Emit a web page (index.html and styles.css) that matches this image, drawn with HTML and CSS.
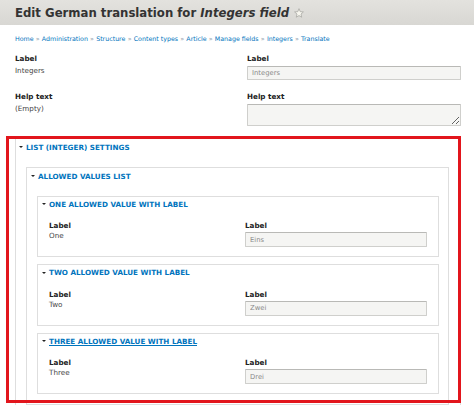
FILE: index.html
```html
<!DOCTYPE html>
<html lang="en">
<head>
<meta charset="utf-8">
<title>Edit German translation for Integers field</title>
<link rel="stylesheet" href="styles.css">
</head>
<body>
<header class="page-header">
  <h1 class="page-title">Edit German translation for <em>Integers field</em> <svg class="star" viewBox="0 0 10 10" width="10" height="10" aria-hidden="true"><path d="M5 0.7 L6.25 3.65 L9.4 3.95 L7 6.05 L7.7 9.2 L5 7.55 L2.3 9.2 L3 6.05 L0.6 3.95 L3.75 3.65 Z" fill="#f7f6ee" stroke="#a9a9a4" stroke-width="0.8" stroke-linejoin="round"/></svg></h1>
</header>
<main class="content">
  <nav class="breadcrumb">
    <a href="#">Home</a><span class="sep">»</span><a href="#">Administration</a><span class="sep">»</span><a href="#">Structure</a><span class="sep">»</span><a href="#">Content types</a><span class="sep">»</span><a href="#">Article</a><span class="sep">»</span><a href="#">Manage fields</a><span class="sep">»</span><a href="#">Integers</a><span class="sep">»</span><a href="#">Translate</a>
  </nav>

  <div class="form-row first">
    <div class="source">
      <div class="field-label">Label</div>
      <div class="field-value">Integers</div>
    </div>
    <div class="translation">
      <label class="field-label">Label</label>
      <input class="text-input" type="text" value="Integers">
    </div>
  </div>

  <div class="form-row second">
    <div class="source">
      <div class="field-label">Help text</div>
      <div class="field-value">(Empty)</div>
    </div>
    <div class="translation">
      <label class="field-label">Help text</label>
      <textarea class="text-area"></textarea>
    </div>
  </div>

  <details class="fs fs-outer" open>
    <summary class="fs-title"><span class="caret"></span>List (integer) settings</summary>
    <details class="fs fs-list" open>
      <summary class="fs-title"><span class="caret"></span>Allowed values list</summary>

      <details class="fs fs-item" open>
        <summary class="fs-title"><span class="caret"></span>One allowed value with label</summary>
        <div class="item-row">
          <div class="source">
            <div class="field-label tight">Label</div>
            <div class="field-value">One</div>
          </div>
          <div class="translation">
            <label class="field-label tight">Label</label>
            <input class="text-input item-input" type="text" value="Eins">
          </div>
        </div>
      </details>

      <details class="fs fs-item" open>
        <summary class="fs-title"><span class="caret"></span>Two allowed value with label</summary>
        <div class="item-row">
          <div class="source">
            <div class="field-label tight">Label</div>
            <div class="field-value">Two</div>
          </div>
          <div class="translation">
            <label class="field-label tight">Label</label>
            <input class="text-input item-input" type="text" value="Zwei">
          </div>
        </div>
      </details>

      <details class="fs fs-item" open>
        <summary class="fs-title focused"><span class="caret"></span><span class="u">Three allowed value with label</span></summary>
        <div class="item-row">
          <div class="source">
            <div class="field-label tight">Label</div>
            <div class="field-value">Three</div>
          </div>
          <div class="translation">
            <label class="field-label tight">Label</label>
            <input class="text-input item-input" type="text" value="Drei">
          </div>
        </div>
      </details>
    </details>
    <div class="highlight" aria-hidden="true"></div>
  </details>
</main>
</body>
</html>
```

FILE: styles.css
```css
* { box-sizing: border-box; }

html, body {
  margin: 0;
  height: 405px;
  overflow: hidden;
}

body {
  font-family: "DejaVu Sans", "Noto Sans", sans-serif;
  font-size: 7.2px;
  color: #222;
  background: #fff;
}

.page-header {
  height: 25px;
  padding-left: 15px;
  background: linear-gradient(#e3e2de, #d8d7d3);
}

.page-title {
  margin: 0;
  font-family: "DejaVu Sans Condensed", "DejaVu Sans", sans-serif;
  font-stretch: condensed;
  font-size: 13px;
  line-height: 25px;
  font-weight: bold;
  color: #333;
  white-space: nowrap;
}

.page-title em { font-style: italic; }

.star {
  display: inline-block;
  vertical-align: -1px;
  margin-left: 1px;
}

.content {
  padding: 0 13px 0 15px;
}

.breadcrumb {
  margin-top: 9px;
  font-size: 6.3px;
  line-height: 10px;
  white-space: nowrap;
}

.breadcrumb a {
  color: #0074bd;
  text-decoration: none;
}

.breadcrumb .sep {
  color: #7f8f9c;
  margin: 0 2.2px;
}

.form-row {
  display: grid;
  grid-template-columns: 232px 214px;
}

.form-row.first { margin-top: 10px; }
.form-row.second { margin-top: 11.5px; }

.field-label {
  display: block;
  font-weight: bold;
  line-height: 10px;
  margin-bottom: 2px;
  color: #222;
}

.field-value {
  line-height: 10px;
  color: #444;
}

.text-input {
  display: block;
  width: 100%;
  height: 14px;
  margin: 0;
  padding: 0 4px;
  font-family: "DejaVu Sans", sans-serif;
  font-size: 6.8px;
  color: #8a8a8a;
  background: #f5f5f3;
  border: 1px solid #cfcfcc;
  border-top-color: #b9b9b6;
  border-radius: 1px;
  outline: none;
}

.text-area {
  display: block;
  width: 100%;
  height: 22px;
  margin: 0;
  padding: 2px 4px;
  font-family: "DejaVu Sans", sans-serif;
  font-size: 6.8px;
  background: #f5f5f3;
  border: 1px solid #cfcfcc;
  border-top-color: #b9b9b6;
  border-radius: 1px;
  resize: vertical;
  outline: none;
}

/* fieldsets */
.fs {
  border: 1px solid #dedede;
  background: #fff;
}

.fs-title {
  display: block;
  list-style: none;
  font-weight: bold;
  text-transform: uppercase;
  color: #0074bd;
  line-height: 10px;
  white-space: nowrap;
  cursor: pointer;
}

.fs-title::-webkit-details-marker { display: none; }

.caret {
  display: inline-block;
  width: 0;
  height: 0;
  border-left: 2px solid transparent;
  border-right: 2px solid transparent;
  border-top: 2.5px solid #222;
  margin-right: 3px;
  vertical-align: 1.5px;
}

.fs-title .u {
  text-decoration: underline;
}

.fs-outer {
  position: relative;
  margin-top: 10px;
  height: 275px;
}

.fs-outer > .fs-title { padding: 6px 0 0 3px; }

.fs-list {
  margin: 14px 11px 0 10px;
  padding-bottom: 10px;
}

.fs-list > .fs-title { padding: 4px 0 0 4px; }

.fs-item {
  margin: 14px 9px 0 10px;
  padding-bottom: 9px;
}

.fs-item + .fs-item { margin-top: 7px; }

.fs-item > .fs-title { padding: 3px 0 0 4px; }

.item-row {
  display: grid;
  grid-template-columns: 196px 1fr;
  margin: 11.5px 11.5px 0 11px;
}

.field-label.tight { margin-bottom: 1px; }
.source .field-label.tight { margin-bottom: 0; }

.item-input { height: 15px; }

/* annotation overlay */
.highlight {
  position: absolute;
  top: -1px;
  left: -10px;
  width: 455px;
  height: 267px;
  border: 3px solid #e2151c;
  pointer-events: none;
}
```
